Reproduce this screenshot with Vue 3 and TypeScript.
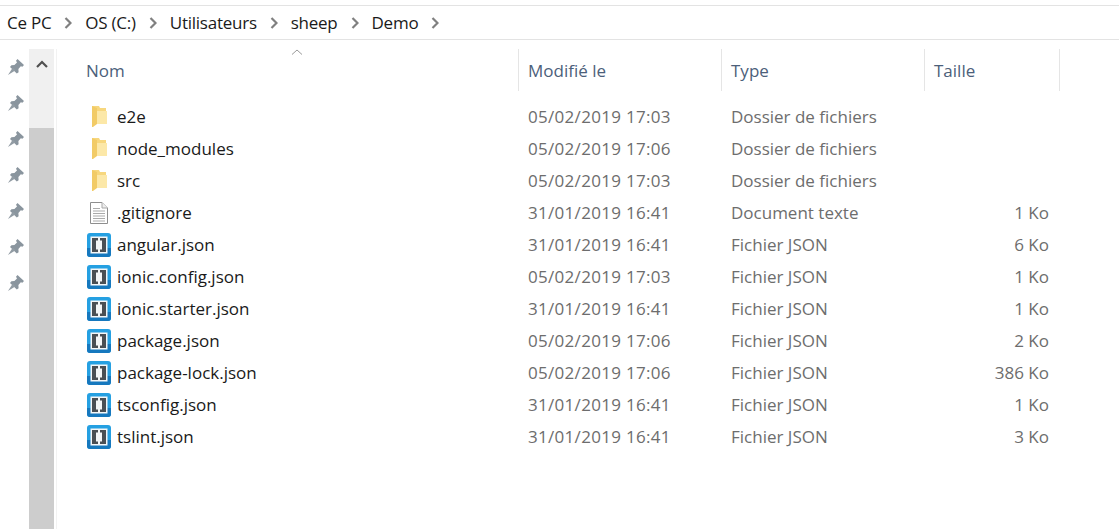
<script setup lang="ts">
interface Row { name: string; date: string; type: string; size: string; icon: 'folder' | 'text' | 'brackets' }
const D1 = '05/02/2019 17:03', D2 = '05/02/2019 17:06', D3 = '31/01/2019 16:41'
const F = 'Dossier de fichiers', J = 'Fichier JSON'
const rows: Row[] = [
  { name: 'e2e', date: D1, type: F, size: '', icon: 'folder' },
  { name: 'node_modules', date: D2, type: F, size: '', icon: 'folder' },
  { name: 'src', date: D1, type: F, size: '', icon: 'folder' },
  { name: '.gitignore', date: D3, type: 'Document texte', size: '1 Ko', icon: 'text' },
  { name: 'angular.json', date: D3, type: J, size: '6 Ko', icon: 'brackets' },
  { name: 'ionic.config.json', date: D1, type: J, size: '1 Ko', icon: 'brackets' },
  { name: 'ionic.starter.json', date: D3, type: J, size: '1 Ko', icon: 'brackets' },
  { name: 'package.json', date: D2, type: J, size: '2 Ko', icon: 'brackets' },
  { name: 'package-lock.json', date: D2, type: J, size: '386 Ko', icon: 'brackets' },
  { name: 'tsconfig.json', date: D3, type: J, size: '1 Ko', icon: 'brackets' },
  { name: 'tslint.json', date: D3, type: J, size: '3 Ko', icon: 'brackets' },
]
const crumbs = ['Ce PC', 'OS (C:)', 'Utilisateurs', 'sheep', 'Demo']
const pins = [0, 1, 2, 3, 4, 5, 6]
</script>

<template>
  <div class="window">
    <nav class="crumbs">
      <template v-for="c in crumbs" :key="c">
        <span class="crumb">{{ c }}</span>
        <svg class="sep" width="8" height="12" viewBox="0 0 8 12"><path d="M1.5 1 L6.5 6 L1.5 11" fill="none" stroke="#808080" stroke-width="2.2" /></svg>
      </template>
    </nav>
    <div class="body">
      <aside class="pins">
        <svg v-for="p in pins" :key="p" class="pin" width="16" height="16" viewBox="0 0 16 16">
          <path d="M9.5 0 L16 6 L14.4 7.8 L12.8 7.2 L10.4 10 L10.6 13.2 L8.8 14.6 L2 8 L3.4 6.2 L6.4 6 L9 3.4 L8 1.8 Z" fill="#8a959e" />
          <path d="M4.8 8.6 L0 16 L7.6 11.2 Z" fill="#929ca4" />
        </svg>
      </aside>
      <div class="scrollbar">
        <div class="arrow">
          <svg width="12" height="8" viewBox="0 0 12 8"><path d="M1 7 L6 2 L11 7" fill="none" stroke="#505050" stroke-width="2.2" /></svg>
        </div>
        <div class="thumb"></div>
      </div>
      <main class="list">
        <svg class="sort" width="12" height="6" viewBox="0 0 12 6"><path d="M1 5.5 L6 1 L11 5.5" fill="none" stroke="#9a9a9a" stroke-width="1" /></svg>
        <header class="head">
          <div class="hcell c-name first">Nom</div>
          <div class="hcell c-date">Modifié le</div>
          <div class="hcell c-type">Type</div>
          <div class="hcell c-size">Taille</div>
        </header>
        <div class="rows">
          <div v-for="r in rows" :key="r.name" class="row">
            <div class="c-name name">
              <span class="ico">
                <svg v-if="r.icon === 'folder'" width="15" height="22" viewBox="0 0 15 22">
                  <path d="M0 0 H7 L8 2 H14 V18 H0 Z" fill="#f7d77e" />
                  <path d="M5 5 H15 V18 H5 Z" fill="#fce8a8" />
                  <path d="M0 0 L5 2 V18 L1 21 H0 Z" fill="#f2cb66" />
                </svg>
                <svg v-else-if="r.icon === 'text'" width="18" height="22" viewBox="0 0 18 22">
                  <path d="M.5 .5 H12 L17.5 6 V21.5 H.5 Z" fill="#fff" stroke="#8e8e8e" />
                  <path d="M12 .5 V6 H17.5" fill="#eee" stroke="#a8a8a8" />
                  <path d="M3 6.5 H10 M3 9 H15 M3 11.5 H15 M3 14 H15 M3 16.5 H15 M3 19 H15" stroke="#ababab" />
                </svg>
                <svg v-else width="24" height="24" viewBox="0 0 24 24">
                  <rect width="24" height="24" rx="3" fill="#25a0e2" />
                  <path d="M0 15 H24 V21 A3 3 0 0 1 21 24 H3 A3 3 0 0 1 0 21 Z" fill="#1678be" />
                  <rect x="3.5" y="3.5" width="17" height="17" fill="#f4f6f7" />
                  <path d="M11 5 H5 V19 H11 V16.5 H9 V7.5 H11 Z M13 5 H19 V19 H13 V16.5 H15 V7.5 H13 Z" fill="#4a4f54" />
                </svg>
              </span>
              <span class="label">{{ r.name }}</span>
            </div>
            <div class="c-date dim date label">{{ r.date }}</div>
            <div class="c-type dim label">{{ r.type }}</div>
            <div class="c-size dim size label">{{ r.size }}</div>
          </div>
        </div>
      </main>
    </div>
  </div>
</template>

<style scoped>
.window {
  width: 1119px;
  height: 529px;
  background: #fff;
  overflow: hidden;
  padding-top: 5px;
  box-sizing: border-box;
  font-family: "Open Sans", "Noto Sans", sans-serif;
  font-size: 17px;
  color: #1a1a1a;
}
.crumbs {
  height: 35px;
  box-sizing: border-box;
  border-top: 1px solid #e3e3e3;
  border-bottom: 1px solid #e3e3e3;
  display: flex;
  align-items: center;
  padding-left: 7px;
  gap: 13px;
  letter-spacing: -0.25px;
}
.sep { flex: none; }
.body {
  display: flex;
  height: 489px;
  padding-top: 9px;
  box-sizing: border-box;
}
.pins {
  width: 29px;
  display: flex;
  flex-direction: column;
  align-items: center;
  gap: 20px;
  padding: 10px 0 0 2px;
  box-sizing: border-box;
}
.pin { flex: none; }
.scrollbar {
  width: 25px;
  background: #f0f0f0;
  display: flex;
  flex-direction: column;
}
.arrow {
  height: 30px;
  display: flex;
  justify-content: center;
  padding-top: 11px;
  box-sizing: border-box;
  margin-bottom: 49px;
}
.thumb { flex: 1; background: #cdcdcd; }
.list {
  position: relative;
  flex: 1;
  margin-left: 2px;
  border-left: 1px solid #f2f2f2;
}
.sort { position: absolute; left: 234px; top: 0; }
.head {
  display: flex;
  height: 42px;
}
.hcell {
  color: #4c607a;
  line-height: 44px;
  padding-left: 9px;
  box-sizing: border-box;
  border-right: 1px solid #e5e5e5;
}
.first { padding-left: 29px; }
.rows {
  padding-top: 10px;
}
.row {
  display: flex;
  height: 32px;
  align-items: center;
}
.c-name { width: 462px; flex: none; }
.c-date { width: 203px; flex: none; padding-left: 9px; box-sizing: border-box; }
.c-type { width: 203px; flex: none; padding-left: 9px; box-sizing: border-box; }
.c-size { width: 135px; flex: none; padding-left: 9px; box-sizing: border-box; }
.name {
  display: flex;
  align-items: center;
  color: #1a1a1a;
}
.ico {
  width: 60px;
  padding: 0 5px 0 29px;
  box-sizing: border-box;
  display: flex;
  justify-content: center;
  flex: none;
}
.label { padding-bottom: 2px; }
.dim { color: #6d6d6d; }
.date { letter-spacing: 0.3px; }
.size { text-align: right; padding-right: 11px; }
</style>
